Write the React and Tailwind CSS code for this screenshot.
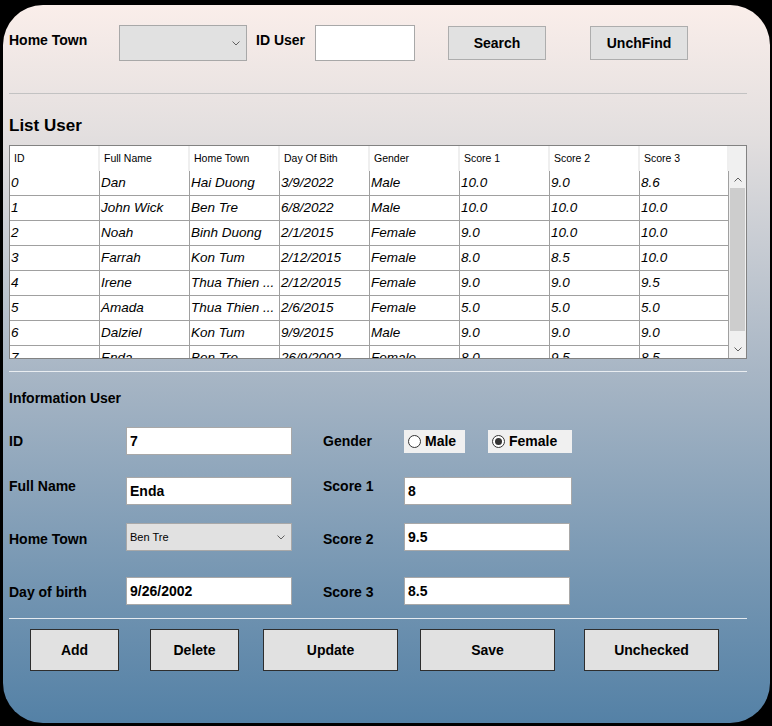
import { useState } from 'react'

const columns = [
    { title: 'ID', w: 'w-[90px]' },
    { title: 'Full Name', w: 'w-[90px]' },
    { title: 'Home Town', w: 'w-[90px]' },
    { title: 'Day Of Bith', w: 'w-[90px]' },
    { title: 'Gender', w: 'w-[90px]' },
    { title: 'Score 1', w: 'w-[90px]' },
    { title: 'Score 2', w: 'w-[90px]' },
    { title: 'Score 3', w: 'w-[89px]' },
]

const users = [
    ['0', 'Dan', 'Hai Duong', '3/9/2022', 'Male', '10.0', '9.0', '8.6'],
    ['1', 'John Wick', 'Ben Tre', '6/8/2022', 'Male', '10.0', '10.0', '10.0'],
    ['2', 'Noah', 'Binh Duong', '2/1/2015', 'Female', '9.0', '10.0', '10.0'],
    ['3', 'Farrah', 'Kon Tum', '2/12/2015', 'Female', '8.0', '8.5', '10.0'],
    ['4', 'Irene', 'Thua Thien ...', '2/12/2015', 'Female', '9.0', '9.0', '9.5'],
    ['5', 'Amada', 'Thua Thien ...', '2/6/2015', 'Female', '5.0', '5.0', '5.0'],
    ['6', 'Dalziel', 'Kon Tum', '9/9/2015', 'Male', '9.0', '9.0', '9.0'],
    ['7', 'Enda', 'Ben Tre', '26/9/2002', 'Female', '8.0', '9.5', '8.5'],
]

function Chevron({ up = false, className = '' }) {
    return (
        <svg width="8" height="5" viewBox="0 0 8 5" className={className}>
            <polyline
                points={up ? '0.5,4.5 4,1 7.5,4.5' : '0.5,0.5 4,4 7.5,0.5'}
                fill="none"
                stroke="#606060"
                strokeWidth="1"
            />
        </svg>
    )
}

function Label({ children, className = '' }) {
    return <div className={'text-[14px] leading-[16px] font-bold text-black ' + className}>{children}</div>
}

function TextBox({ value, className = '' }) {
    return (
        <div
            className={
                'h-[28px] bg-white border border-[#a8a8a8] flex items-center pl-[3px] text-[14px] font-bold text-black ' +
                className
            }
        >
            {value}
        </div>
    )
}

function Radio({ label, checked, onClick, className = '' }) {
    return (
        <button
            type="button"
            onClick={onClick}
            className={'h-[23px] bg-[#f0f0f0] flex items-center pl-[4px] gap-[4px] text-[14px] font-bold text-black ' + className}
        >
            <span className="w-[13px] h-[13px] rounded-full border border-[#333333] bg-white flex items-center justify-center">
                {checked && <span className="w-[7px] h-[7px] rounded-full bg-[#333333]"></span>}
            </span>
            {label}
        </button>
    )
}

function ActionButton({ children, className = '' }) {
    return (
        <button
            type="button"
            className={
                'h-[42px] pt-[1px] bg-[#e1e1e1] border border-[#2e2e2e] text-[14px] font-bold text-black flex items-center justify-center ' +
                className
            }
        >
            {children}
        </button>
    )
}

export default function App() {
    const [gender, setGender] = useState('Female')

    return (
        <div className="w-[772px] h-[726px] bg-black pt-[5px] pl-[3px] font-['Liberation_Sans',Arial,sans-serif]">
            <div className="w-[767px] h-[718px] rounded-[40px] pl-[6px] overflow-hidden bg-[linear-gradient(to_bottom,#faeeea_0%,#e3dfdf_18%,#a8b6c5_51%,#7294b1_82%,#5481a6_100%)]">
                {/* search bar */}
                <div className="mt-[20px] flex items-start h-[36px]">
                    <Label className="w-[110px] mt-[7px]">Home Town</Label>
                    <div className="w-[128px] h-[36px] bg-[#e1e1e1] border border-[#a8a8a8] flex items-center justify-end pr-[6px]">
                        <Chevron />
                    </div>
                    <Label className="ml-[9px] w-[59px] mt-[7px]">ID User</Label>
                    <div className="w-[100px] h-[36px] bg-white border border-[#a8a8a8]"></div>
                    <button
                        type="button"
                        className="ml-[33px] mt-[1px] w-[98px] h-[34px] pt-[1px] bg-[#e1e1e1] border border-[#adadad] text-[14px] font-bold text-black"
                    >
                        Search
                    </button>
                    <button
                        type="button"
                        className="ml-[44px] mt-[1px] w-[98px] h-[34px] pt-[1px] bg-[#e1e1e1] border border-[#adadad] text-[14px] font-bold text-black"
                    >
                        UnchFind
                    </button>
                </div>

                <div className="mt-[32px] w-[738px] h-px bg-[#c2c2c2]"></div>

                <div className="mt-[22px] h-[20px] text-[17px] leading-[20px] font-bold text-black">List User</div>

                {/* table */}
                <div className="mt-[9px] w-[738px] h-[214px] border border-[#828282] bg-white flex overflow-hidden">
                    <div className="w-[719px] overflow-hidden">
                        <div className="flex h-[25px]">
                            {columns.map((col) => (
                                <div
                                    key={col.title}
                                    className={
                                        col.w +
                                        ' h-[25px] pt-[1px] border-r-2 border-[#efefef] pl-[4px] flex items-center text-[10.5px] text-black'
                                    }
                                >
                                    {col.title}
                                </div>
                            ))}
                        </div>
                        {users.map((row) => (
                            <div key={row[0]} className="flex h-[25px] border-b border-[#a0a0a0]">
                                {row.map((cell, i) => (
                                    <div
                                        key={i}
                                        className={
                                            columns[i].w +
                                            ' h-[24px] pt-[1px] border-r border-[#a0a0a0] pl-[1px] flex items-center text-[13.5px] italic text-black whitespace-nowrap overflow-hidden'
                                        }
                                    >
                                        {cell}
                                    </div>
                                ))}
                            </div>
                        ))}
                    </div>
                    <div className="w-[17px] bg-[#f0f0f0] flex flex-col">
                        <div className="h-[25px]"></div>
                        <div className="h-[17px] flex items-center justify-center">
                            <Chevron up />
                        </div>
                        <div className="h-[143px] mx-[1px] bg-[#cdcdcd]"></div>
                        <div className="flex-1"></div>
                        <div className="h-[17px] flex items-center justify-center">
                            <Chevron />
                        </div>
                    </div>
                </div>

                <div className="mt-[12px] w-[738px] h-px bg-[#e9edf1]"></div>

                <Label className="mt-[18px]">Information User</Label>

                {/* form */}
                <div className="mt-[21px] flex items-start h-[28px]">
                    <Label className="w-[117px] mt-[6px]">ID</Label>
                    <TextBox value="7" className="w-[166px]" />
                    <Label className="ml-[31px] w-[81px] mt-[6px]">Gender</Label>
                    <Radio
                        label="Male"
                        checked={gender === 'Male'}
                        onClick={() => setGender('Male')}
                        className="w-[61px] mt-[3px]"
                    />
                    <Radio
                        label="Female"
                        checked={gender === 'Female'}
                        onClick={() => setGender('Female')}
                        className="ml-[23px] w-[84px] mt-[3px]"
                    />
                </div>

                <div className="mt-[22px] flex items-start h-[28px]">
                    <Label className="w-[117px] mt-[1px]">Full Name</Label>
                    <TextBox value="Enda" className="w-[166px]" />
                    <Label className="ml-[31px] w-[81px] mt-[1px]">Score 1</Label>
                    <TextBox value="8" className="w-[168px]" />
                </div>

                <div className="mt-[18px] flex items-start h-[28px]">
                    <Label className="w-[117px] mt-[8px]">Home Town</Label>
                    <div className="w-[166px] h-[28px] bg-[#e1e1e1] border border-[#a8a8a8] flex items-center justify-between pl-[3px] pr-[6px] text-[11px] text-black">
                        Ben Tre
                        <Chevron />
                    </div>
                    <Label className="ml-[31px] w-[81px] mt-[8px]">Score 2</Label>
                    <TextBox value="9.5" className="w-[166px]" />
                </div>

                <div className="mt-[26px] flex items-start h-[28px]">
                    <Label className="w-[117px] mt-[7px]">Day of birth</Label>
                    <TextBox value="9/26/2002" className="w-[166px]" />
                    <Label className="ml-[31px] w-[81px] mt-[7px]">Score 3</Label>
                    <TextBox value="8.5" className="w-[166px]" />
                </div>

                <div className="mt-[13px] w-[738px] h-px bg-[#e4eaf0]"></div>

                {/* actions */}
                <div className="mt-[10px] flex">
                    <ActionButton className="ml-[21px] w-[89px]">Add</ActionButton>
                    <ActionButton className="ml-[31px] w-[89px]">Delete</ActionButton>
                    <ActionButton className="ml-[24px] w-[135px]">Update</ActionButton>
                    <ActionButton className="ml-[22px] w-[135px]">Save</ActionButton>
                    <ActionButton className="ml-[29px] w-[135px]">Unchecked</ActionButton>
                </div>
            </div>
        </div>
    )
}
